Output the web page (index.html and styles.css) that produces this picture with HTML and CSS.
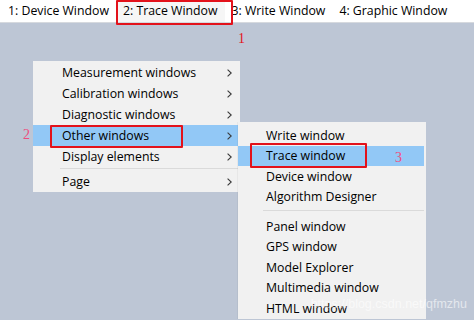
FILE: index.html
```html
<!DOCTYPE html>
<html lang="en">
<head>
<meta charset="utf-8">
<title>Windows menu</title>
<link rel="stylesheet" href="styles.css">
</head>
<body>
<div class="stage">
  <div class="tabbar">
    <div class="tab">1: Device Window</div>
    <div class="tab tab-active">2: Trace Window</div>
    <div class="tab">3: Write Window</div>
    <div class="tab">4: Graphic Window</div>
  </div>

  <div class="mark mark-tab"></div>
  <span class="note note-1">1</span>

  <div class="menu menu-main">
    <div class="item"><span class="label">Measurement windows</span><svg class="chev" viewBox="0 0 5 8"><polyline points="0.6,0.6 4.2,4 0.6,7.4"/></svg></div>
    <div class="item"><span class="label">Calibration windows</span><svg class="chev" viewBox="0 0 5 8"><polyline points="0.6,0.6 4.2,4 0.6,7.4"/></svg></div>
    <div class="item"><span class="label">Diagnostic windows</span><svg class="chev" viewBox="0 0 5 8"><polyline points="0.6,0.6 4.2,4 0.6,7.4"/></svg></div>
    <div class="item item-hot"><span class="label">Other windows</span><svg class="chev" viewBox="0 0 5 8"><polyline points="0.6,0.6 4.2,4 0.6,7.4"/></svg></div>
    <div class="item"><span class="label">Display elements</span><svg class="chev" viewBox="0 0 5 8"><polyline points="0.6,0.6 4.2,4 0.6,7.4"/></svg></div>
    <div class="sep sep-main"></div>
    <div class="item"><span class="label">Page</span><svg class="chev" viewBox="0 0 5 8"><polyline points="0.6,0.6 4.2,4 0.6,7.4"/></svg></div>
  </div>
  <div class="mark mark-other"></div>
  <span class="note note-2">2</span>

  <div class="menu menu-sub">
    <div class="item"><span class="label">Write window</span></div>
    <div class="item item-hot"><span class="label">Trace window</span></div>
    <div class="item"><span class="label">Device window</span></div>
    <div class="item"><span class="label">Algorithm Designer</span></div>
    <div class="sep sep-sub"></div>
    <div class="item"><span class="label">Panel window</span></div>
    <div class="item"><span class="label">GPS window</span></div>
    <div class="item"><span class="label">Model Explorer</span></div>
    <div class="item"><span class="label">Multimedia window</span></div>
    <div class="item"><span class="label">HTML window</span></div>
  </div>
  <div class="mark mark-trace"></div>
  <span class="note note-3">3</span>

  <span class="watermark">https://blog.csdn.net/qfmzhu</span>
</div>
</body>
</html>
```

FILE: styles.css
```css
html, body {
  margin: 0;
  padding: 0;
}

body {
  background: #bdc6d5;
  font-family: "Open Sans", "Noto Sans", "Liberation Sans", sans-serif;
  font-size: 12.3px;
  color: #000;
}

.stage {
  position: relative;
  width: 474px;
  height: 320px;
  overflow: hidden;
}

/* tab strip */
.tabbar {
  display: flex;
  height: 22px;
  background: #ffffff;
  border-bottom: 1px solid #d6d9de;
  padding-left: 1px;
}

.tab {
  padding: 0 7px;
  line-height: 22px;
  white-space: nowrap;
}

.tab-active {
  background: #f6f6f6;
}

/* menus */
.menu {
  position: absolute;
  background: #f1f1f1;
}

.menu-main {
  left: 33px;
  top: 61px;
  width: 207px;
  padding-top: 1px;
}

.menu-sub {
  left: 238px;
  top: 122px;
  width: 188px;
  padding-top: 3px;
  padding-bottom: 0;
  box-shadow: -1px 0 0 rgba(0, 0, 0, 0.04);
}

.item {
  display: flex;
  align-items: center;
  white-space: nowrap;
}

.menu-main .item {
  height: 21px;
  padding-left: 29px;
  padding-right: 8px;
}

.menu-sub .item {
  height: 20.5px;
  padding-left: 28px;
}

.label {
  flex: 1;
}

.item-hot {
  background: #92c8f6;
}

.menu-sub .item-hot {
  margin-right: 2px;
}

.chev {
  width: 5px;
  height: 8px;
  fill: none;
  stroke: #3a3a3a;
  stroke-width: 1.1;
}

.sep {
  height: 1px;
  background: #dadada;
}

.sep-main {
  margin: 1px 0 2px 27px;
}

.sep-sub {
  margin: 3px 2px 5px 25px;
}

/* annotation overlays */
.mark {
  position: absolute;
  border: 2px solid #e3121b;
  border-radius: 1px;
  pointer-events: none;
}

.mark-tab {
  left: 116px;
  top: 0;
  width: 113px;
  height: 21px;
}

.mark-other {
  left: 50px;
  top: 125px;
  width: 129px;
  height: 19px;
}

.mark-trace {
  left: 250px;
  top: 143px;
  width: 113px;
  height: 21px;
}

.note {
  position: absolute;
  font-family: "Liberation Serif", "DejaVu Serif", serif;
  font-size: 14px;
  line-height: 1;
}

.note-1 {
  left: 238px;
  top: 32px;
  color: #e3121b;
}

.note-2 {
  left: 23px;
  top: 128px;
  color: #ee4d7e;
}

.note-3 {
  left: 395px;
  top: 151px;
  color: #ee4d7e;
}

.watermark {
  position: absolute;
  right: 7px;
  top: 297px;
  font-family: "Liberation Sans", sans-serif;
  font-size: 12.5px;
  color: rgba(255, 255, 255, 0.6);
  white-space: nowrap;
}
```
